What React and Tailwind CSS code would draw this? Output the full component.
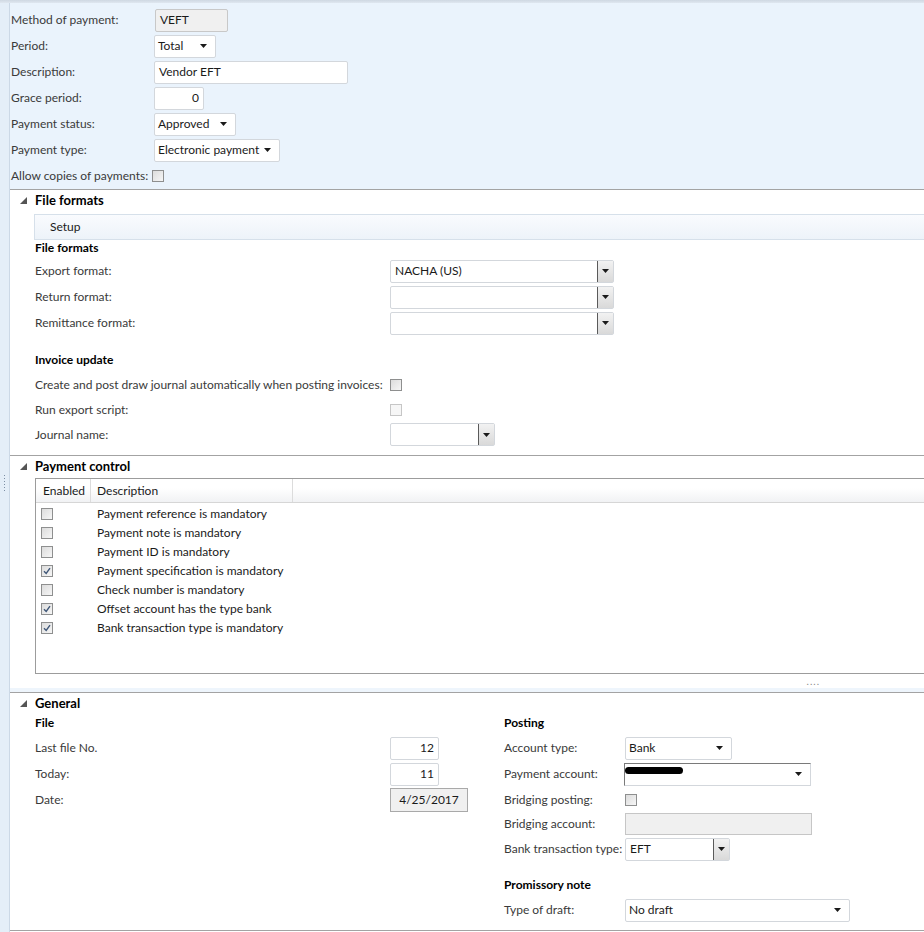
import React from 'react'

const font = { fontFamily: 'Lato, "Noto Sans", sans-serif' }

function Arrow() {
  return (
    <svg width="7" height="4" viewBox="0 0 7 4" className="shrink-0">
      <polygon points="0,0 7,0 3.5,4" fill="#1a1a1a" />
    </svg>
  )
}

function Caret() {
  return (
    <svg width="7" height="7" viewBox="0 0 7 7" className="shrink-0">
      <polygon points="7,0 7,7 0,7" fill="#555" />
    </svg>
  )
}

function Field({ w, value = '', right, gray, className = '' }) {
  return (
    <div
      className={`h-[23px] border rounded-[2px] flex items-center px-[4px] text-[#1a1a1a] ${gray ? 'bg-[#f0f0f0] border-[#c8c8c8]' : 'bg-white border-[#d3d7dc]'} ${right ? 'justify-end' : ''} ${className}`}
      style={{ width: w }}
    >
      {value}
    </div>
  )
}

function Select({ w, value = '' }) {
  return (
    <div
      className="h-[23px] border border-[#d3d7dc] rounded-[2px] bg-white flex items-center pl-[3px] pr-[8px] text-[#1a1a1a]"
      style={{ width: w }}
    >
      <span className="flex-1">{value}</span>
      <Arrow />
    </div>
  )
}

function Combo({ w, value = '' }) {
  return (
    <div
      className="h-[23px] border border-[#d3d7dc] rounded-[2px] bg-white flex items-stretch text-[#1a1a1a]"
      style={{ width: w }}
    >
      <span className="flex-1 flex items-center pl-[4px]">{value}</span>
      <div className="w-[16px] border-l border-l-[#5a5a5a] bg-gradient-to-b from-[#f2f2f2] to-[#d9d9d9] flex items-center justify-center">
        <Arrow />
      </div>
    </div>
  )
}

function Check({ checked, disabled }) {
  return (
    <div
      className={`w-[12px] h-[12px] border flex items-center justify-center ${disabled ? 'border-[#c6c6c6] bg-[#f6f6f6]' : 'border-[#8e8f8f] bg-gradient-to-br from-[#dcdcdc] to-[#f6f6f6]'}`}
    >
      {checked && (
        <svg width="8" height="8" viewBox="0 0 8 8">
          <path d="M1 4.2 L3.2 6.4 L7 1.2" stroke="#3f5677" strokeWidth="1.4" fill="none" />
        </svg>
      )}
    </div>
  )
}

function Row({ label, labelW, h = 26, children }) {
  return (
    <div className="flex items-center" style={{ height: h }}>
      <div className="shrink-0 text-[#3a3a3a]" style={{ width: labelW }}>{label}</div>
      {children}
    </div>
  )
}

function SectionHeader({ title }) {
  return (
    <div className="h-[22px] flex items-center pl-[10px] border-t border-t-[#a3a3a3]">
      <Caret />
      <span className="ml-[8px] font-bold text-[13px] text-black">{title}</span>
    </div>
  )
}

function Heading({ children, h = 18 }) {
  return (
    <div className="flex items-center font-bold text-black" style={{ height: h }}>{children}</div>
  )
}

const controls = [
  ['Payment reference is mandatory', false],
  ['Payment note is mandatory', false],
  ['Payment ID is mandatory', false],
  ['Payment specification is mandatory', true],
  ['Check number is mandatory', false],
  ['Offset account has the type bank', true],
  ['Bank transaction type is mandatory', true],
]

export default function App() {
  return (
    <div className="w-[924px] h-[932px] overflow-hidden bg-white text-[12px] flex flex-col" style={font}>
      <div className="h-[3px] bg-gradient-to-b from-[#cfd8e2] to-[#dfe7f0] shrink-0" />
      <div className="flex flex-1">
        <div className="w-[10px] shrink-0 bg-[#e4eef8] border-r border-r-[#cbd8e6] flex flex-col items-center">
          <div className="mt-[472px] flex flex-col gap-[2px]">
            {[0, 1, 2, 3, 4, 5].map(i => (
              <div key={i} className="w-[1px] h-[1px] bg-[#7c8ea3]" />
            ))}
          </div>
        </div>
        <div className="flex-1 flex flex-col">
          <div className="bg-[#eaf3fc] pt-[4px] pl-[1px]">
            <Row label="Method of payment:" labelW={143}>
              <Field w={73} value="VEFT" gray className="ml-[1px]" />
            </Row>
            <Row label="Period:" labelW={143}><Select w={62} value="Total" /></Row>
            <Row label="Description:" labelW={143}><Field w={194} value="Vendor EFT" /></Row>
            <Row label="Grace period:" labelW={143}><Field w={50} value="0" right /></Row>
            <Row label="Payment status:" labelW={143}><Select w={82} value="Approved" /></Row>
            <Row label="Payment type:" labelW={143}><Select w={126} value="Electronic payment" /></Row>
            <div className="h-[26px] flex items-center">
              <span className="text-[#3a3a3a] mr-[4px]">Allow copies of payments:</span>
              <Check />
            </div>
          </div>

          <SectionHeader title="File formats" />
          <div className="pl-[25px]">
            <div className="h-[26px] mt-[3px] -ml-[1px] border border-[#d6e0ea] border-r-0 bg-gradient-to-b from-[#f9fbfe] to-[#edf3f9] flex items-center pl-[15px] text-[#1a1a1a]">
              Setup
            </div>
            <Heading h={16}>File formats</Heading>
            <div className="pt-[2px]">
              <Row label="Export format:" labelW={355}><Combo w={224} value="NACHA (US)" /></Row>
              <Row label="Return format:" labelW={355}><Combo w={224} /></Row>
              <Row label="Remittance format:" labelW={355}><Combo w={224} /></Row>
            </div>
            <div className="h-[11px]" />
            <Heading h={25}>Invoice update</Heading>
            <Row label="Create and post draw journal automatically when posting invoices:" labelW={355} h={25}>
              <Check />
            </Row>
            <Row label="Run export script:" labelW={355} h={25}><Check disabled /></Row>
            <Row label="Journal name:" labelW={355} h={25}><Combo w={105} /></Row>
            <div className="h-[8px]" />
          </div>

          <SectionHeader title="Payment control" />
          <div className="pl-[25px] pt-[1px]">
            <div className="h-[196px] border border-[#9c9c9c] border-r-0 bg-white">
              <div className="h-[24px] flex bg-gradient-to-b from-white from-40% to-[#f1f2f4] border-b border-b-[#d6d6d6] text-[#1a1a1a]">
                <div className="w-[55px] flex items-center pl-[7px] border-r border-r-[#dcdcdc]">Enabled</div>
                <div className="w-[202px] flex items-center pl-[6px] border-r border-r-[#dcdcdc]">Description</div>
                <div className="flex-1" />
              </div>
              <div className="pt-[1px]">
                {controls.map(([t, c]) => (
                  <div key={t} className="h-[19px] flex items-center text-[#1a1a1a]">
                    <div className="w-[55px] pl-[5px]"><Check checked={c} /></div>
                    <div className="pl-[6px]">{t}</div>
                  </div>
                ))}
              </div>
            </div>
            <div className="h-[14px] flex items-center justify-end pr-[104px] text-[#8a8a8a] tracking-[1px] text-[10px] leading-none">
              ....
            </div>
          </div>
          <div className="h-[4px] bg-[#eef5fc]" />

          <SectionHeader title="General" />
          <div className="pl-[25px] flex">
            <div className="w-[469px]">
              <Heading>File</Heading>
              <div className="pt-[3px]">
                <Row label="Last file No." labelW={355}><Field w={49} value="12" right /></Row>
                <Row label="Today:" labelW={355}><Field w={49} value="11" right /></Row>
                <Row label="Date:" labelW={355}>
                  <div className="h-[24px] w-[78px] border border-[#a9a9a9] bg-[#f0f0f0] flex items-center justify-center text-[#1a1a1a]">4/25/2017</div>
                </Row>
              </div>
            </div>
            <div>
              <Heading>Posting</Heading>
              <div className="pt-[3px]">
                <Row label="Account type:" labelW={121}><Select w={107} value="Bank" /></Row>
                <Row label="Payment account:" labelW={121}>
                  <div className="h-[23px] w-[187px] border border-[#d3d7dc] border-t-[#7a7a7a] border-l-[#7a7a7a] bg-white flex items-center pr-[8px] -ml-[1px]">
                    <span className="flex-1 flex items-center">
                      <span className="inline-block w-[58px] h-[7px] rounded-full bg-black -mt-[8px]" />
                    </span>
                    <Arrow />
                  </div>
                </Row>
                <Row label="Bridging posting:" labelW={121} h={25}><Check /></Row>
                <Row label="Bridging account:" labelW={121} h={24}>
                  <div className="h-[22px] w-[187px] border border-[#c6c6c6] bg-[#f0f0f0]" />
                </Row>
                <Row label="Bank transaction type:" labelW={121}><Combo w={105} value="EFT" /></Row>
                <div className="h-[14px]" />
                <Heading>Promissory note</Heading>
                <div className="pt-[3px]">
                  <Row label="Type of draft:" labelW={121}><Select w={225} value="No draft" /></Row>
                </div>
              </div>
            </div>
          </div>
          <div className="flex-1" />
          <div className="h-[2px] border-t border-t-[#a3a3a3]" />
        </div>
      </div>
    </div>
  )
}
